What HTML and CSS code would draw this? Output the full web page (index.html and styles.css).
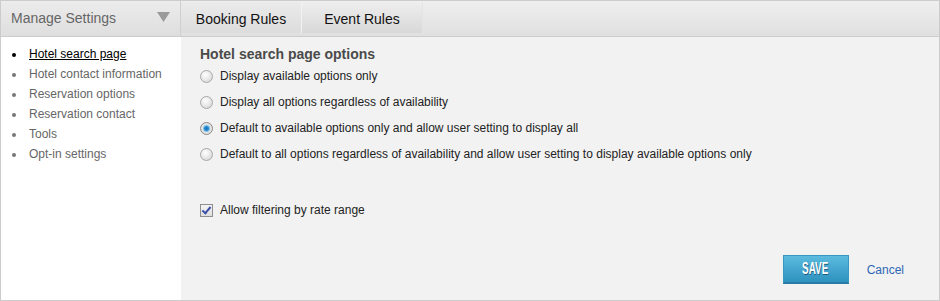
FILE: index.html
```html
<!DOCTYPE html>
<html lang="en">
<head>
	<meta charset="UTF-8">
	<title>Manage Settings</title>
	<link rel="stylesheet" href="styles.css">
</head>
<body>
<div class="frame">
	<div class="side-head">
		<span>Manage Settings</span>
		<svg class="arrow" width="13" height="10" viewBox="0 0 13 10"><polygon points="0,0 13,0 6.5,10" fill="#9a9a9a"/></svg>
	</div>
	<div class="tabs">
		<div class="tab active">Booking Rules</div>
		<div class="tab">Event Rules</div>
	</div>

	<ul class="nav">
		<li class="current"><a href="#">Hotel search page</a></li>
		<li>Hotel contact information</li>
		<li>Reservation options</li>
		<li>Reservation contact</li>
		<li>Tools</li>
		<li>Opt-in settings</li>
	</ul>

	<div class="content">
		<h3 class="title">Hotel search page options</h3>
		<label class="row"><input type="radio" name="opt"> Display available options only</label>
		<label class="row"><input type="radio" name="opt"> Display all options regardless of availability</label>
		<label class="row"><input type="radio" name="opt" checked> Default to available options only and allow user setting to display all</label>
		<label class="row"><input type="radio" name="opt"> Default to all options regardless of availability and allow user setting to display available options only</label>

		<label class="row check"><input type="checkbox" checked> Allow filtering by rate range</label>

		<div class="actions">
			<button class="save"><span>SAVE</span></button>
			<a href="#" class="cancel">Cancel</a>
		</div>
	</div>
</div>
</body>
</html>
```

FILE: styles.css
```css
body{
	margin: 0;
	font-family: "Liberation Sans", Arial, sans-serif;
}
.frame{
	width: 938px;
	height: 299px;
	border: 1px solid #cccccc;
	display: grid;
	grid-template-columns: 180px 1fr;
	grid-template-rows: 36px 1fr;
	background: #f2f2f2;
}
.side-head{
	border-right: 1px solid #cfcfcf;
	border-bottom: 1px solid #cccccc;
	background: linear-gradient(#ececec, #dedede);
	display: flex;
	align-items: center;
	justify-content: space-between;
	padding: 0 10px 0 10px;
	font-size: 14px;
	color: #666666;
}
.side-head span{
	margin-top: -1px;
}
.arrow{
	margin-top: -4px;
}
.tabs{
	border-bottom: 1px solid #cccccc;
	background: linear-gradient(#efefef, #e0e0e0);
	display: flex;
	align-items: flex-start;
	padding-top: 1px;
}
.tab{
	width: 120px;
	height: 31px;
	line-height: 35px;
	text-align: center;
	font-size: 14px;
	color: #111111;
	background: linear-gradient(#eeeeee, #d8d8d8);
	border-right: 1px solid #e4e4e4;
}
.tab.active{
	background: linear-gradient(#ebebeb, #dcdcdc);
	border-right: 1px solid #f2f2f2;
}
.nav{
	margin: 0;
	padding: 7px 0 0 0;
	list-style: none;
	background: #ffffff;
}
.nav li{
	height: 20px;
	line-height: 20px;
	font-size: 12px;
	color: #666666;
	padding-left: 28px;
	position: relative;
}
.nav li::before{
	content: "";
	position: absolute;
	left: 11px;
	top: 9px;
	width: 4px;
	height: 4px;
	border-radius: 50%;
	background: #777777;
}
.nav li.current::before{
	background: #000000;
}
.nav a{
	color: #000000;
	text-decoration: underline;
}
.content{
	padding: 9px 0 0 19px;
	display: flex;
	flex-direction: column;
}
.title{
	margin: 0;
	font-size: 14px;
	line-height: 17px;
	color: #4a4a4a;
}
.row{
	height: 26px;
	display: flex;
	align-items: center;
	font-size: 12px;
	color: #222222;
}
.row input{
	appearance: none;
	-webkit-appearance: none;
	width: 13px;
	height: 13px;
	margin: 0 7px 0 0;
	border-radius: 50%;
	border: 1px solid #a8a8a8;
	background: radial-gradient(circle at 40% 35%, #ffffff, #dcdcdc 75%);
	box-sizing: border-box;
	position: relative;
}
.row input:checked{
	background: radial-gradient(circle, #1f74b4 0, #2a8ad0 2px, #7cc3ea 3px, #e4e4e4 4px, #d6d6d6 100%);
	border-color: #8c8c8c;
}
.row.check{
	margin-top: 30px;
}
.row input[type=checkbox]{
	border-radius: 0;
	border: 1px solid #8f8f8f;
	background: linear-gradient(#f4f4f4, #dedede);
}
.row input[type=checkbox]:checked::after{
	content: "";
	position: absolute;
	left: 3px;
	top: 0px;
	width: 3px;
	height: 7px;
	border: solid #3c4fa8;
	border-width: 0 2px 2px 0;
	transform: rotate(40deg);
}
.actions{
	display: flex;
	align-items: center;
	justify-content: flex-end;
	margin-top: 32px;
	padding-right: 35px;
}
.save{
	width: 66px;
	height: 29px;
	border: 1px solid #3896c2;
	border-bottom: 2px solid #2a7ba6;
	background: linear-gradient(#5cbade, #2d92bf);
	padding: 0;
	cursor: pointer;
}
.save span{
	display: inline-block;
	font-family: "Liberation Sans", Arial, sans-serif;
	font-weight: bold;
	font-size: 16px;
	color: #ffffff;
	text-shadow: 1px 1px 0 #1c5d80;
	transform: scaleX(0.62);
}
.cancel{
	margin-left: 18px;
	font-size: 12px;
	color: #2f66b5;
	text-decoration: none;
}
```
